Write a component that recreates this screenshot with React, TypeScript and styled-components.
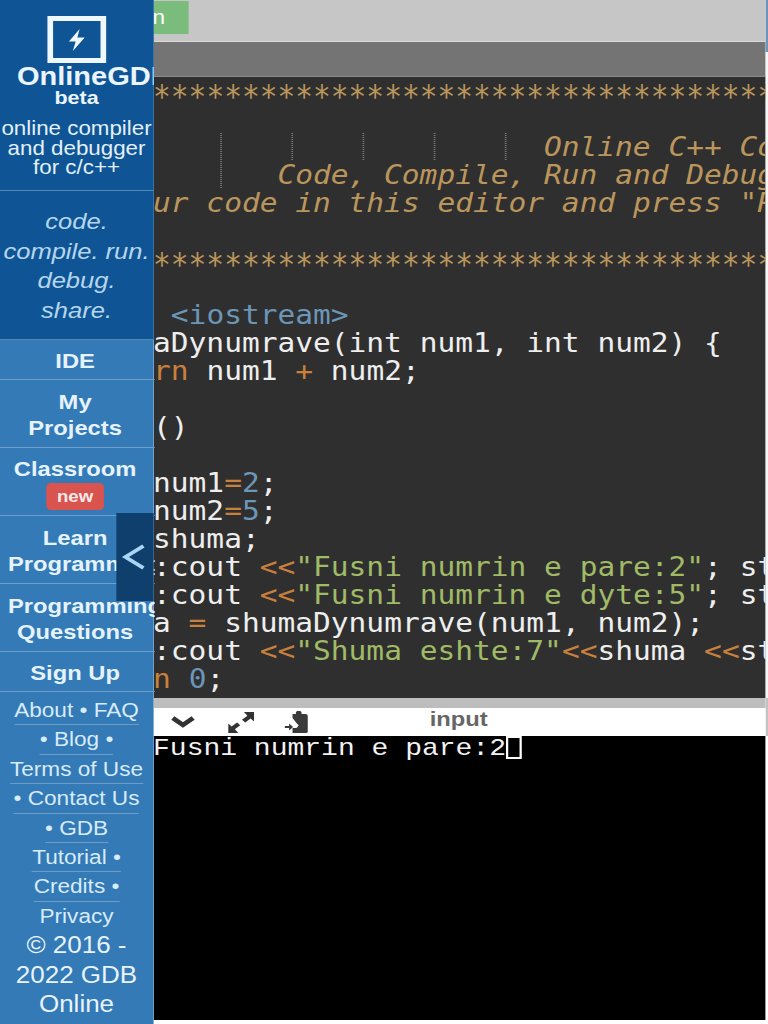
import styled, { createGlobalStyle } from "styled-components"

const GlobalStyle = createGlobalStyle`
  html, body {
    margin: 0;
    padding: 0;
    width: 768px;
    height: 1024px;
    overflow: hidden;
    background: #ffffff;
  }
`

// the whole page in the picture is stretched sideways, so lay out at 680px and widen
const Page = styled.div`
  display: flex;
  width: 680px;
  height: 1024px;
  overflow: hidden;
  transform: scaleX(1.1294);
  transform-origin: 0 0;
  font-family: "Liberation Sans", Arial, sans-serif;
`

const Sidebar = styled.aside`
  position: relative;
  flex: 0 0 135.5px;
  width: 135.5px;
  height: 1024px;
  background: #337ab7;
  color: #ffffff;
  text-align: center;
  z-index: 2;
`

const Brand = styled.div`
  height: 191px;
  box-sizing: border-box;
  padding-top: 16px;
  background: #0f5595;
  border-bottom: 1px solid #5288b4;
  overflow: hidden;
`

const LogoBox = styled.div`
  display: flex;
  align-items: center;
  justify-content: center;
  width: 52px;
  height: 47px;
  box-sizing: border-box;
  margin: 0 auto;
  border: 5px solid #f0f8ff;
`

const BrandName = styled.div`
  padding-left: 15px;
  font-size: 25.7px;
  line-height: 26px;
  font-weight: 700;
  text-align: left;
  white-space: nowrap;
  color: #eaf5fe;
`

const Beta = styled.div`
  font-size: 19px;
  line-height: 17px;
  font-weight: 700;
  color: #eaf5fe;
`

const Tagline = styled.div`
  margin-top: 13px;
  font-size: 19.8px;
  line-height: 19.5px;
  color: #e2f0fa;
  white-space: nowrap;
`

const Motto = styled.div`
  height: 149px;
  box-sizing: border-box;
  padding-top: 16px;
  background: #0f5595;
  border-bottom: 1px solid #5288b4;
  color: #b5d5ec;
  font-size: 22.6px;
  line-height: 29.5px;
  font-style: italic;
  white-space: nowrap;
`

const NavItem = styled.div<{ $height: number }>`
  display: flex;
  flex-direction: column;
  justify-content: center;
  width: 137px;
  height: ${(p) => p.$height}px;
  box-sizing: border-box;
  padding: 3px 11px 0 7px;
  border-bottom: 1px solid #6f9fca;
  color: #e6f3fd;
  font-size: 21px;
  line-height: 26px;
  font-weight: 700;
  white-space: nowrap;
  overflow: hidden;
`

const NewBadge = styled.span`
  display: block;
  align-self: center;
  width: 51px;
  height: 27px;
  margin-top: 1px;
  border-radius: 4px;
  background: #d9534f;
  color: #f6e9e9;
  font-size: 16.5px;
  line-height: 26px;
`

const Collapse = styled.div`
  position: absolute;
  top: 513px;
  left: 103px;
  display: flex;
  align-items: center;
  justify-content: center;
  width: 33px;
  height: 88px;
  padding-right: 3px;
  box-sizing: border-box;
  background: #0f3f6d;
`

const FooterLinks = styled.div`
  display: flex;
  flex-direction: column;
  align-items: center;
  padding-top: 4px;
  color: #d8ebf9;
  font-size: 20px;
`

const FooterLink = styled.div<{ $last?: boolean }>`
  height: 29.4px;
  line-height: 29px;
  box-sizing: border-box;
  white-space: nowrap;
  border-bottom: ${(p) => (p.$last ? "none" : "1px solid #6f9cc4")};
`

const Copyright = styled.div`
  color: #e8f3fb;
  font-size: 23px;
  line-height: 29.4px;
`

const Main = styled.main`
  display: flex;
  flex-direction: column;
  flex: 0 0 542px;
  width: 542px;
  height: 1024px;
  overflow: hidden;
`

const RightEdge = styled.div`
  flex: 1 1 auto;
  height: 1024px;
  background: linear-gradient(
    to bottom,
    #6d93ba 0 52px,
    #f6f6f6 52px 698px,
    #c2c2c2 698px 736px,
    #ffffff 736px
  );
`

const TopBar = styled.div`
  flex: 0 0 42px;
  box-sizing: border-box;
  padding-top: 1px;
  background: #c6c6c6;
  border-bottom: 1px solid #dadada;
`

const RunButton = styled.div`
  width: 31px;
  height: 33px;
  box-sizing: border-box;
  background: #79bc7b;
  color: #ffffff;
  font-size: 20px;
  line-height: 33px;
  overflow: hidden;
  direction: rtl;
  text-align: left;
  padding-right: 20px;
`

const TabBar = styled.div`
  flex: 0 0 35px;
  box-sizing: border-box;
  background: #747474;
  border-bottom: 1px solid #8a8a8a;
`

const Editor = styled.div`
  flex: 0 0 621px;
  background: #2f2f2f;
  overflow: hidden;
`

const CodeLines = styled.pre`
  margin: 0 0 0 -8ch;
  font-family: "DejaVu Sans Mono", monospace;
  font-size: 26.15px;
  line-height: 28px;
  color: #eeeeee;
`

const Line = styled.div`
  height: 28px;
  white-space: pre;
`

const Comment = styled.span`
  color: #bb965c;
  font-style: italic;
`

const Stars = styled.span`
  display: inline-block;
  color: #bb965c;
  transform: translateY(5px) scaleY(1.25);
`

const Keyword = styled.span`
  color: #c9803c;
`

const Number = styled.span`
  color: #6b96b8;
`

const Str = styled.span`
  color: #a0ba66;
`

const IndentGuide = styled.span`
  display: inline-block;
  width: 4ch;
  height: 28px;
  vertical-align: top;
  background: repeating-linear-gradient(to bottom, #7a7a7a 0 1px, transparent 1px 2px) no-repeat;
  background-size: 1.5px 100%;
  background-position: calc(100% - 2px) 0;
`

const Splitter = styled.div`
  flex: 0 0 10px;
  background: #bdbdbd;
`

const OutputBar = styled.div`
  display: flex;
  align-items: center;
  flex: 0 0 28px;
  box-sizing: border-box;
  background: #ffffff;
`

const BarIcon = styled.div<{ $width: number }>`
  display: flex;
  justify-content: center;
  flex: 0 0 ${(p) => p.$width}px;
`

const InputLabel = styled.div`
  margin-left: 95px;
  margin-top: -6px;
  color: #666666;
  font-size: 21px;
  font-weight: 700;
`

const Terminal = styled.div`
  flex: 0 0 284px;
  background: #000000;
  color: #f2f2f2;
  font-family: "Liberation Mono", monospace;
  font-size: 24.8px;
  line-height: 24px;
  white-space: pre;
`

const Cursor = styled.span`
  display: inline-block;
  width: 14px;
  height: 23px;
  box-sizing: border-box;
  border: 2px solid #ffffff;
  vertical-align: top;
`

const stars = "*".repeat(60)
const guides = (count: number) =>
  Array.from({ length: count }, (_, i) => <IndentGuide key={i}>{"    "}</IndentGuide>)

export default function App() {
  return (
    <>
      <GlobalStyle />
      <Page>
        <Sidebar>
          <Brand>
            <LogoBox>
              <svg width="20" height="24" viewBox="0 0 20 24">
                <path d="M12.5 1 3 13.5h6L6.5 23 17 9.5h-6.5z" fill="#f0f8ff" />
              </svg>
            </LogoBox>
            <BrandName>OnlineGDB</BrandName>
            <Beta>beta</Beta>
            <Tagline>
              online compiler
              <br />
              and debugger
              <br />
              for c/c++
            </Tagline>
          </Brand>
          <Motto>
            code.
            <br />
            compile. run.
            <br />
            debug.
            <br />
            share.
          </Motto>
          <NavItem $height={40}>IDE</NavItem>
          <NavItem $height={68}>
            My
            <br />
            Projects
          </NavItem>
          <NavItem $height={68}>
            Classroom
            <NewBadge>new</NewBadge>
          </NavItem>
          <NavItem $height={68}>
            Learn
            <br />
            Programming
          </NavItem>
          <NavItem $height={68}>
            Programming
            <br />
            Questions
          </NavItem>
          <NavItem $height={40}>Sign Up</NavItem>
          <Collapse>
            <svg width="22" height="28" viewBox="0 0 22 28">
              <path d="M20 3 4 14l16 11" fill="none" stroke="#a9d6f7" strokeWidth="3.5" />
            </svg>
          </Collapse>
          <FooterLinks>
            <FooterLink>About • FAQ</FooterLink>
            <FooterLink>• Blog •</FooterLink>
            <FooterLink>Terms of Use</FooterLink>
            <FooterLink>• Contact Us</FooterLink>
            <FooterLink>• GDB</FooterLink>
            <FooterLink>Tutorial •</FooterLink>
            <FooterLink>Credits •</FooterLink>
            <FooterLink $last>Privacy</FooterLink>
            <Copyright>
              © 2016 -
              <br />
              2022 GDB
              <br />
              Online
            </Copyright>
          </FooterLinks>
        </Sidebar>
        <Main>
          <TopBar>
            <RunButton>Run</RunButton>
          </TopBar>
          <TabBar />
          <Editor>
            <CodeLines>
              <Line>
                <Stars>/{stars}</Stars>
              </Line>
              <Line> </Line>
              <Line>
                <Comment>
                  {guides(7)}
                  {"  Online C++ Compiler."}
                </Comment>
              </Line>
              <Line>
                <Comment>
                  {guides(3)}
                  {"   Code, Compile, Run and Debug C++ program online."}
                </Comment>
              </Line>
              <Line>
                <Comment>Write your code in this editor and press "Run" button to compile</Comment>
              </Line>
              <Line> </Line>
              <Line>
                <Stars>{stars}</Stars>
              </Line>
              <Line> </Line>
              <Line>
                <Keyword>#include</Keyword> <Number>&lt;iostream&gt;</Number>
              </Line>
              <Line>int shumaDynumrave(int num1, int num2) {"{"}</Line>
              <Line>
                {"    "}
                <Keyword>return</Keyword> num1 <Keyword>+</Keyword> num2;
              </Line>
              <Line>{"}"}</Line>
              <Line>int main()</Line>
              <Line>{"{"}</Line>
              <Line>
                {"    int num1"}
                <Keyword>=</Keyword>
                <Number>2</Number>;
              </Line>
              <Line>
                {"    int num2"}
                <Keyword>=</Keyword>
                <Number>5</Number>;
              </Line>
              <Line>{"    int shuma;"}</Line>
              <Line>
                {"    std::cout "}
                <Keyword>&lt;&lt;</Keyword>
                <Str>"Fusni numrin e pare:2"</Str>; std::endl;
              </Line>
              <Line>
                {"    std::cout "}
                <Keyword>&lt;&lt;</Keyword>
                <Str>"Fusni numrin e dyte:5"</Str>; std::endl;
              </Line>
              <Line>
                {"    shuma "}
                <Keyword>=</Keyword> shumaDynumrave(num1, num2);
              </Line>
              <Line>
                {"    std::cout "}
                <Keyword>&lt;&lt;</Keyword>
                <Str>"Shuma eshte:7"</Str>
                <Keyword>&lt;&lt;</Keyword>shuma <Keyword>&lt;&lt;</Keyword>std::endl;
              </Line>
              <Line>
                {"   "}
                <Keyword>return</Keyword> <Number>0</Number>;
              </Line>
            </CodeLines>
          </Editor>
          <Splitter />
          <OutputBar>
            <BarIcon $width={53}>
              <svg width="22" height="14" viewBox="0 0 22 14">
                <path d="M2 3l9 7 9-7" fill="none" stroke="#333333" strokeWidth="4.5" />
              </svg>
            </BarIcon>
            <BarIcon $width={50}>
              <svg width="23" height="21" viewBox="0 0 24 22">
                <path d="M24 0v10l-3.2-3.2-5 4.2-3-3 5-4.2L14.6 0zM0 22V12l3.2 3.2 5-4.2 3 3-5 4.2L9.4 22z" fill="#333333" />
              </svg>
            </BarIcon>
            <BarIcon $width={47}>
              <svg width="21" height="22" viewBox="0 0 21 22">
                <path
                  d="M7 3h3V1.500A1.500 1.500 0 0 1 11.500 0h2A1.500 1.500 0 0 1 15 1.500V3h3.500A2 2 0 0 1 20.500 5v15.500a1.500 1.500 0 0 1-1.500 1.500H7v-5h3.500l2-2.500-2-2.500-3.500-5z"
                  fill="#3a3a3a"
                />
                <path d="M0 15h4v-2.500l3.500 3.500L4 19.500V17H0z" fill="#3a3a3a" />
              </svg>
            </BarIcon>
            <InputLabel>input</InputLabel>
          </OutputBar>
          <Terminal>
            Fusni numrin e pare:2
            <Cursor />
          </Terminal>
        </Main>
        <RightEdge />
      </Page>
    </>
  )
}
